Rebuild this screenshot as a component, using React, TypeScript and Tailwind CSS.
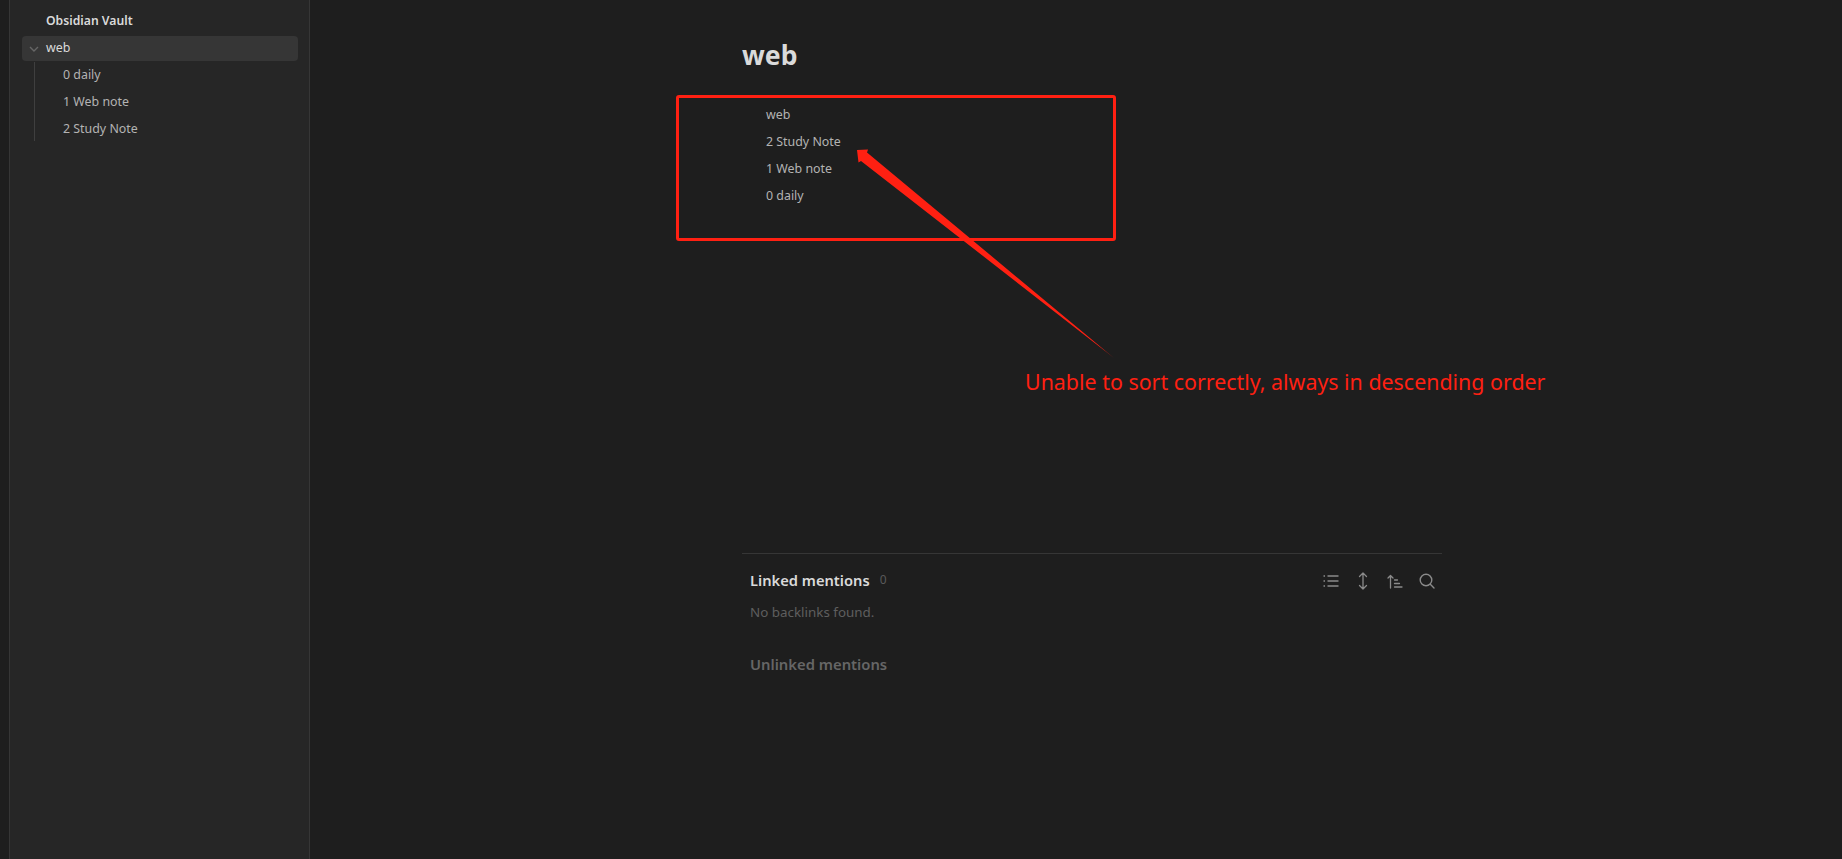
const font = "[font-family:'Noto_Sans','Liberation_Sans',sans-serif]";

function TreeChild({ label }: { label: string }) {
  return <div className="h-[27px] shrink-0 pl-[28px] flex items-center text-[12.4px] text-[#b3b3b3]">{label}</div>;
}

function MainRow({ label }: { label: string }) {
  return <div className="h-[27px] flex items-center text-[12.4px] text-[#b3b3b3]">{label}</div>;
}

function ListIcon() {
  return (
    <svg width="16" height="14" viewBox="0 0 16 14" fill="none" stroke="#8a8a8a" strokeWidth="1.3">
      <path d="M4.5 2h11M4.5 7h11M4.5 12h11M.5 2h1.5M.5 7h1.5M.5 12h1.5" />
    </svg>
  );
}
function ExpandIcon() {
  return (
    <svg width="10" height="18" viewBox="0 0 10 18" fill="none" stroke="#8a8a8a" strokeWidth="1.3" strokeLinecap="round" strokeLinejoin="round">
      <path d="M5 1v16M1.5 4.5L5 1l3.5 3.5M1.5 13.5L5 17l3.5-3.5" />
    </svg>
  );
}
function SortIcon() {
  return (
    <svg width="16" height="15" viewBox="0 0 16 15" fill="none" stroke="#8a8a8a" strokeWidth="1.3" strokeLinecap="round" strokeLinejoin="round">
      <path d="M3.5 14V1.5M1 4l2.5-2.5L6 4M7.5 6h3M7.5 9.5h5M7.5 13h7.5" />
    </svg>
  );
}
function SearchIcon() {
  return (
    <svg width="16" height="16" viewBox="0 0 16 16" fill="none" stroke="#8a8a8a" strokeWidth="1.4" strokeLinecap="round">
      <circle cx="7" cy="7" r="5.8" />
      <path d="M11.3 11.3L15 15" />
    </svg>
  );
}

function ToolButton({ children }: { children: React.ReactNode }) {
  return <div className="w-[32px] flex items-center justify-center">{children}</div>;
}

export default function App() {
  return (
    <div className={`relative w-[1842px] h-[859px] overflow-hidden flex bg-[#1e1e1e] ${font}`}>
      <div className="w-[10px] bg-[#1e1e1e] border-r border-[#363636] shrink-0" />
      <aside className="w-[300px] shrink-0 bg-[#262626] border-r border-[#363636] pt-[8px] pl-[12px] pr-[11px]">
        <div className="h-[27px] pl-[24px] flex items-center text-[12.2px] font-semibold text-[#dadada]">Obsidian Vault</div>
        <div className="h-[25px] mt-[1px] rounded-[4px] bg-[#363636] flex items-center text-[12.4px] text-[#dadada]">
          <svg className="ml-[7px] mr-[7px]" width="10" height="10" viewBox="0 0 10 10" fill="none" stroke="#666" strokeWidth="1.4">
            <path d="M1 3l4 4 4-4" />
          </svg>
          web
        </div>
        <div className="mt-[1px] ml-[12px] h-[79px] flex flex-col border-l border-[#3f3f3f]">
          <TreeChild label="0 daily" />
          <TreeChild label="1 Web note" />
          <TreeChild label="2 Study Note" />
        </div>
      </aside>
      <main className="flex-1 pl-[432px]">
        <div className="w-[700px]">
          <h1 className="h-[102px] pt-[34px] text-[26.6px] leading-[42px] font-bold text-[#dadada]">web</h1>
          <div className="h-[451px] pl-[24px]">
            <MainRow label="web" />
            <MainRow label="2 Study Note" />
            <MainRow label="1 Web note" />
            <MainRow label="0 daily" />
          </div>
          <div className="border-t border-[#363636] pl-[8px]">
            <div className="h-[52px] flex items-center">
              <span className="text-[14.7px] font-semibold text-[#dadada]">Linked mentions</span>
              <span className="ml-[10px] text-[12px] text-[#5a5a5a]">0</span>
              <div className="ml-auto -mr-[1px] mt-[2px] flex items-center">
                <ToolButton><ListIcon /></ToolButton>
                <ToolButton><ExpandIcon /></ToolButton>
                <ToolButton><SortIcon /></ToolButton>
                <ToolButton><SearchIcon /></ToolButton>
              </div>
            </div>
            <div className="text-[13.4px] leading-[20px] -mt-[4px] text-[#5f5f5f]">No backlinks found.</div>
            <div className="mt-[32px] text-[14.8px] leading-[20px] font-semibold text-[#666666]">Unlinked mentions</div>
          </div>
        </div>
      </main>

      <div className="absolute left-[676px] top-[95px] w-[440px] h-[146px] border-[3px] border-[#ff2012] rounded-[3px]" />
      <svg className="absolute left-0 top-0 pointer-events-none" width="1842" height="859" viewBox="0 0 1842 859">
        <defs>
          <linearGradient id="fade" gradientUnits="userSpaceOnUse" x1="857" y1="150" x2="1114" y2="358">
            <stop offset="0.94" stopColor="#ff2012" />
            <stop offset="1" stopColor="#ff2012" stopOpacity="0.5" />
          </linearGradient>
        </defs>
        <path d="M857 150L868 149.5 867 152.5 1114 358 861 161 858.5 162.5Z" fill="url(#fade)" />
      </svg>
      <div className="absolute left-[1025px] top-[366px] text-[21.4px] leading-[32px] text-[#ff2012] whitespace-nowrap">
        Unable to sort correctly, always in descending order
      </div>
    </div>
  );
}
